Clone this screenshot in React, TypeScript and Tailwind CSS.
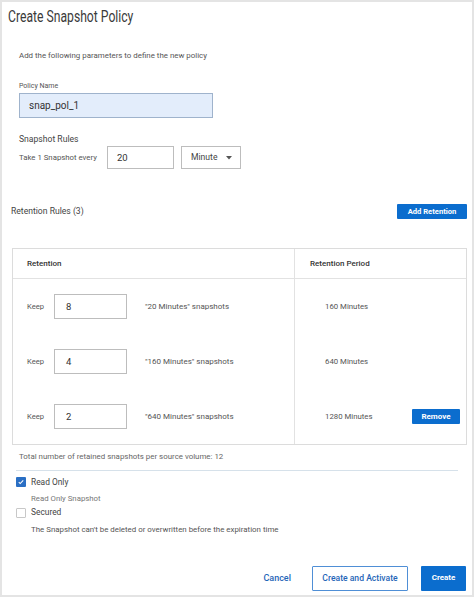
import React from 'react'

const rows = [
  { keep: '8', label: '"20 Minutes" snapshots', period: '160 Minutes', removable: false },
  { keep: '4', label: '"160 Minutes" snapshots', period: '640 Minutes', removable: false },
  { keep: '2', label: '"640 Minutes" snapshots', period: '1280 Minutes', removable: true },
]

export default function App() {
  return (
    <div className="w-[474px] h-[597px] bg-white border-2 border-[#e4e4e4] text-[#3c3c3c] overflow-hidden" style={{ fontFamily: 'Roboto, "Noto Sans", sans-serif' }}>
      {/* Title */}
      <h1 className="text-[16px] leading-none text-[#3a3a3a] pl-[8px] pt-[7px] origin-left scale-x-[0.76] whitespace-nowrap">Create Snapshot Policy</h1>

      <div className="pl-[17px] pr-[6px]">
        <p className="text-[7.9px] text-[#555] mt-[25px]">Add the following parameters to define the new policy</p>

        {/* Policy name */}
        <label className="block text-[7px] text-[#555] mt-[19px]">Policy Name</label>
        <div className="mt-[2px] w-[194px] h-[25px] bg-[#e3edfb] border border-[#9fb3cc] flex items-center pl-[9px] text-[10px] text-[#333]">
          snap_pol_1
        </div>

        {/* Snapshot rules */}
        <div className="text-[8.6px] text-[#444] mt-[15px]">Snapshot Rules</div>
        <div className="flex items-center">
          <span className="text-[7.8px] text-[#555] w-[88px]">Take 1 Snapshot every</span>
          <div className="w-[67px] h-[23px] border border-[#bdbdbd] flex items-center pl-[9px] text-[9.5px] text-[#333]">20</div>
          <div className="ml-[7px] w-[60px] h-[23px] border border-[#bdbdbd] flex items-center pl-[9px] text-[8.6px] text-[#444]">
            Minute
            <svg className="ml-[9px] w-[6px] h-[4px]" viewBox="0 0 6 4"><path d="M0 0h6L3 3.5z" fill="#555" /></svg>
          </div>
        </div>
      </div>

      {/* Retention rules */}
      <div className="flex items-center justify-between pl-[9px] pr-[5px] mt-[35px]">
        <span className="text-[8.6px] text-[#444]">Retention Rules (3)</span>
        <button className="w-[70px] h-[15px] bg-[#0b6dce] text-white text-[7.6px] font-bold rounded-[1px]">Add Retention</button>
      </div>

      <div className="ml-[10px] mr-[5px] mt-[29px] border border-[#dcdcdc] h-[197px] flex flex-col">
        <div className="flex h-[30px] border-b border-[#e2e2e2] text-[8px] font-medium text-[#333]">
          <div className="w-[282px] border-r border-[#e2e2e2] flex items-center pl-[14px]">Retention</div>
          <div className="flex-1 flex items-center pl-[15px]">Retention Period</div>
        </div>
        <div className="flex flex-1">
          <div className="w-[282px] border-r border-[#e2e2e2] flex flex-col pt-[15px] gap-[30px]">
            {rows.map(r => (
              <div key={r.keep} className="flex items-center h-[25px] pl-[14px]">
                <span className="text-[7.6px] text-[#555] w-[27px]">Keep</span>
                <div className="w-[73px] h-[25px] border border-[#bdbdbd] flex items-center pl-[11px] text-[9.5px] text-[#333]">{r.keep}</div>
                <span className="ml-[18px] text-[8px] text-[#555]">{r.label}</span>
              </div>
            ))}
          </div>
          <div className="flex-1 flex flex-col pt-[15px] gap-[30px]">
            {rows.map(r => (
              <div key={r.period} className="flex items-center h-[25px] pl-[30px] pr-[6px]">
                <span className="text-[7.8px] text-[#555]">{r.period}</span>
                {r.removable && (
                  <button className="ml-auto w-[48px] h-[15px] bg-[#0b6dce] text-white text-[8px] font-bold rounded-[1px]">Remove</button>
                )}
              </div>
            ))}
          </div>
        </div>
      </div>

      <div className="pl-[17px] text-[7.9px] text-[#666] mt-[6px]">Total number of retained snapshots per source volume: 12</div>
      <div className="mx-[14px] mt-[7px] border-t border-[#d6e1ea]" />

      {/* Options */}
      <div className="pl-[14px] mt-[5px]">
        <label className="flex items-center gap-[5px]">
          <span className="w-[10px] h-[10px] bg-[#2a6fc4] rounded-[1px] flex items-center justify-center">
            <svg viewBox="0 0 10 10" className="w-[8px] h-[8px]"><path d="M2.2 5.2l1.8 1.8 3.8-4" fill="none" stroke="#fff" strokeWidth="1.3" /></svg>
          </span>
          <span className="text-[8.4px] text-[#444]">Read Only</span>
        </label>
        <div className="pl-[15px] text-[7.8px] text-[#777] mt-[4px]">Read Only Snapshot</div>
        <label className="flex items-center gap-[5px] mt-[2px]">
          <span className="w-[10px] h-[10px] border border-[#c8c8c8] rounded-[1px] bg-white" />
          <span className="text-[8.4px] text-[#444]">Secured</span>
        </label>
        <div className="pl-[15px] text-[7.9px] text-[#555] mt-[5px]">The Snapshot can't be deleted or overwritten before the expiration time</div>
      </div>

      {/* Footer */}
      <div className="flex items-center justify-end pr-[6px] mt-[30px]">
        <button className="text-[9px] font-medium text-[#1f66b8] mr-[21px]">Cancel</button>
        <button className="w-[96px] h-[25px] border border-[#4f8fd6] text-[8.6px] font-medium text-[#1f66b8] rounded-[1px]">Create and Activate</button>
        <button className="ml-[13px] w-[45px] h-[25px] bg-[#0b6dce] text-white text-[8px] font-bold rounded-[1px]">Create</button>
      </div>
    </div>
  )
}
